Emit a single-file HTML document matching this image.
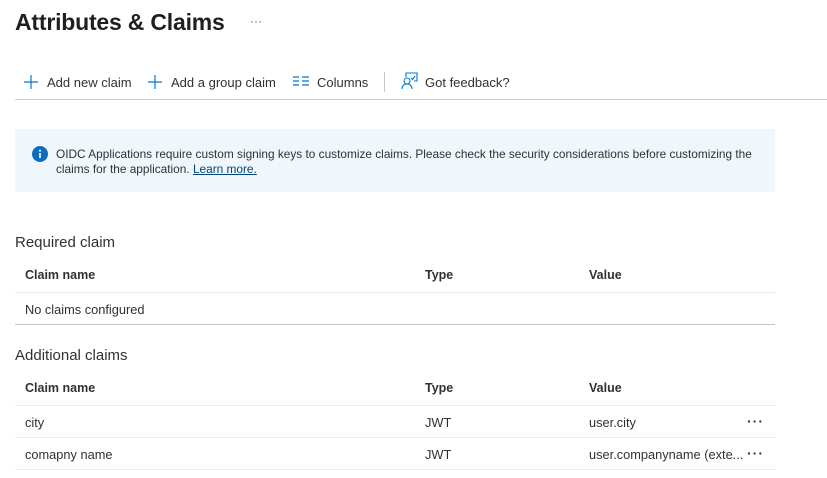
<!DOCTYPE html>
<html><head><style>
body{margin:0;width:827px;height:478px;background:#fff;font-family:"Liberation Sans",sans-serif;color:#323130;position:relative;overflow:hidden}
.a{position:absolute;white-space:nowrap}
h1{position:absolute;left:15px;top:9px;margin:0;font-size:23px;font-weight:bold;color:#201f1e;letter-spacing:-0.2px}
.tb{font-size:13px;top:75px}
.hr{position:absolute;height:1px;background:#edebe9;left:15px;width:760px}
.th{font-size:12.5px;font-weight:bold;color:#323130}
.td{font-size:12.8px}
.dots{font-size:14px;font-weight:bold;letter-spacing:1px;color:#323130}
</style></head><body>
<h1>Attributes &amp; Claims</h1>
<div class="a" style="left:250px;top:14px;font-size:12px;color:#605e5c">···</div>
<svg class="a" style="left:23px;top:74px" width="16" height="16"><path d="M8 1v14M1 8h14" stroke="#0078d4" stroke-width="1.2"/></svg>
<div class="a tb" style="left:47px">Add new claim</div>
<svg class="a" style="left:147px;top:74px" width="16" height="16"><path d="M8 1v14M1 8h14" stroke="#0078d4" stroke-width="1.2"/></svg>
<div class="a tb" style="left:171px">Add a group claim</div>
<svg class="a" style="left:292px;top:75px" width="18" height="14"><path d="M1 2h6M1 6h6M1 10h6M10 2h7M10 6h7M10 10h7" stroke="#0078d4" stroke-width="1.2"/></svg>
<div class="a tb" style="left:317px">Columns</div>
<div class="a" style="left:384px;top:72px;width:1px;height:20px;background:#c8c6c4"></div>
<svg class="a" style="left:400px;top:72px" width="18" height="18"><circle cx="7" cy="9" r="3" fill="none" stroke="#0078d4" stroke-width="1.1"/><path d="M2 17c0-3 2-5 5-5s5 2 5 5" fill="none" stroke="#0078d4" stroke-width="1.1"/><path d="M6 5V1h11v8h-3" fill="none" stroke="#0078d4" stroke-width="1.1"/><path d="M11 6l1.5 1.5L15 4" fill="none" stroke="#0078d4" stroke-width="1.1"/></svg>
<div class="a tb" style="left:425px">Got feedback?</div>
<div class="a" style="left:15px;top:99px;width:812px;height:1px;background:#d2d0ce"></div>
<div class="a" style="left:15px;top:129px;width:760px;height:63px;background:#eff6fc"></div>
<svg class="a" style="left:32px;top:146px" width="16" height="16"><circle cx="8" cy="8" r="8" fill="#0f6cbd"/><rect x="7.2" y="7" width="1.6" height="5" fill="#fff"/><circle cx="8" cy="4.7" r="1" fill="#fff"/></svg>
<div class="a" style="left:56px;top:147px;font-size:11.85px;line-height:15px;color:#323130">OIDC Applications require custom signing keys to customize claims. Please check the security considerations before customizing the<br>claims for the application. <span style="color:#004578;text-decoration:underline">Learn more.</span></div>
<div class="a" style="left:15px;top:234px;font-size:15px">Required claim</div>
<div class="a th" style="left:25px;top:268px">Claim name</div>
<div class="a th" style="left:425px;top:268px">Type</div>
<div class="a th" style="left:589px;top:268px">Value</div>
<div class="hr" style="top:292px"></div>
<div class="a td" style="left:25px;top:302px">No claims configured</div>
<div class="hr" style="top:324px;background:#c8c6c4"></div>
<div class="a" style="left:15px;top:347px;font-size:15px">Additional claims</div>
<div class="a th" style="left:25px;top:381px">Claim name</div>
<div class="a th" style="left:425px;top:381px">Type</div>
<div class="a th" style="left:589px;top:381px">Value</div>
<div class="hr" style="top:405px"></div>
<div class="a td" style="left:25px;top:415px">city</div>
<div class="a td" style="left:425px;top:415px">JWT</div>
<div class="a td" style="left:589px;top:415px">user.city</div>
<div class="a dots" style="left:747px;top:413px">···</div>
<div class="hr" style="top:437px"></div>
<div class="a td" style="left:25px;top:447px">comapny name</div>
<div class="a td" style="left:425px;top:447px">JWT</div>
<div class="a td" style="left:589px;top:447px">user.companyname (exte...</div>
<div class="a dots" style="left:747px;top:445px">···</div>
<div class="hr" style="top:469px"></div>
</body></html>
